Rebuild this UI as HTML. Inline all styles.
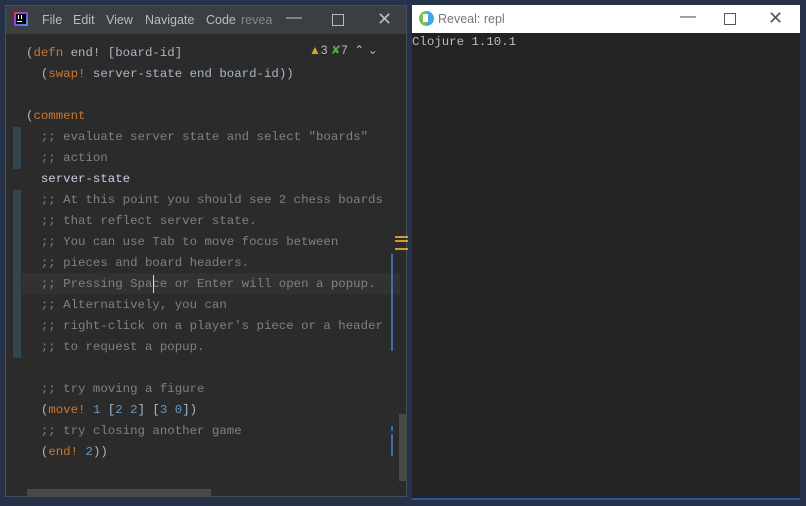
<!DOCTYPE html>
<html><head><style>
body{margin:0;width:806px;height:506px;background:#26324a;position:relative;overflow:hidden;font-family:"Liberation Sans",sans-serif}
.ide{position:absolute;left:5px;top:5px;width:402px;height:492px;background:#2b2b2b;border:1px solid #4a4f57;box-sizing:border-box}
.tb{position:absolute;left:0;top:0;width:100%;height:28px;background:#3c3f41;color:#bbb;font-size:12.5px}
.tb span{position:absolute;top:7px}
.code{position:absolute;left:0;top:1px;font-family:"Liberation Mono",monospace;font-size:12.4px;color:#a9b7c6;white-space:pre}
.l{position:absolute;left:20px;height:21px;line-height:21px}
.c{color:#808080}.k{color:#cc7832}.n{color:#6897bb}.p{color:#a9b7c6}
.rw{position:absolute;left:412px;top:5px;width:388px;height:493px;background:#232323;border-bottom:2px solid #2a5699}
.rt{position:absolute;left:0;top:0;width:100%;height:28px;background:#fff;color:#777;font-size:12.5px}
</style></head><body>
<div class="ide">
 <div class="tb">
  <div style="position:absolute;left:8px;top:6px;width:14px;height:14px;background:linear-gradient(135deg,#e8356c,#7b4bf0,#2da8ff)"><div style="position:absolute;left:2px;top:2px;width:10px;height:10px;background:#000"></div><div style="position:absolute;left:3px;top:9px;width:5px;height:1px;background:#fff"></div><div style="position:absolute;left:4px;top:3px;width:1px;height:4px;background:#fff"></div><div style="position:absolute;left:7px;top:3px;width:1px;height:4px;background:#fff"></div></div>
  <span style="left:36px">File</span><span style="left:67px">Edit</span><span style="left:100px">View</span><span style="left:139px">Navigate</span><span style="left:200px">Code</span><span style="left:235px;color:#888">revea</span>
  <span style="left:280px;top:3px;font-size:16px">&#8212;</span>
  <div style="position:absolute;left:326px;top:8px;width:10px;height:10px;border:1px solid #bbb"></div>
  <span style="left:371px;top:3px;font-size:18px">&#x2715;</span>
 </div>
 <div style="position:absolute;left:7px;top:121px;width:8px;height:42px;background:#34444f"></div>
 <div style="position:absolute;left:7px;top:184px;width:8px;height:168px;background:#34444f"></div>
 <div style="position:absolute;left:16px;top:267px;width:378px;height:21px;background:#323232"></div>
 <div style="position:absolute;left:385px;top:248px;width:2px;height:97px;background:#3e6fa8"></div>
 <div style="position:absolute;left:385px;top:420px;width:2px;height:5px;background:#3e6fa8"></div>
 <div style="position:absolute;left:385px;top:428px;width:2px;height:22px;background:#3e6fa8"></div>
 <div style="position:absolute;left:389px;top:230px;width:13px;height:2px;background:#d09a30"></div>
 <div style="position:absolute;left:389px;top:234px;width:13px;height:2px;background:#d09a30"></div>
 <div style="position:absolute;left:389px;top:242px;width:13px;height:2px;background:#d09a30"></div>
 <div style="position:absolute;left:393px;top:408px;width:8px;height:67px;background:#494949"></div>
 <div style="position:absolute;left:21px;top:483px;width:184px;height:8px;background:#494949"></div>
 <div style="position:absolute;left:303px;top:37px;font-size:12px;color:#bbb"><span style="color:#e0a030">&#9650;</span>3 <span style="color:#5aa84a">&#10008;</span>7 &nbsp;&#8963; &#8964;</div>
 <div class="code">
<div class="l" style="top:36px">(<span class="k">defn</span> end! [board-id]</div>
<div class="l" style="top:57px">  (<span class="k">swap!</span> server-state end board-id))</div>
<div class="l" style="top:99px">(<span class="k">comment</span></div>
<div class="l c" style="top:120px">  ;; evaluate server state and select "boards"</div>
<div class="l c" style="top:141px">  ;; action</div>
<div class="l" style="top:162px;color:#c5d0e0">  server-state</div>
<div class="l c" style="top:183px">  ;; At this point you should see 2 chess boards</div>
<div class="l c" style="top:204px">  ;; that reflect server state.</div>
<div class="l c" style="top:225px">  ;; You can use Tab to move focus between</div>
<div class="l c" style="top:246px">  ;; pieces and board headers.</div>
<div class="l c" style="top:267px">  ;; Pressing Space or Enter will open a popup.</div>
<div class="l c" style="top:288px">  ;; Alternatively, you can</div>
<div class="l c" style="top:309px">  ;; right-click on a player's piece or a header</div>
<div class="l c" style="top:330px">  ;; to request a popup.</div>
<div class="l c" style="top:372px">  ;; try moving a figure</div>
<div class="l" style="top:393px">  (<span class="k">move!</span> <span class="n">1</span> [<span class="n">2 2</span>] [<span class="n">3 0</span>])</div>
<div class="l c" style="top:414px">  ;; try closing another game</div>
<div class="l" style="top:435px">  (<span class="k">end!</span> <span class="n">2</span>))</div>
 </div>
 <div style="position:absolute;left:147px;top:269px;width:1px;height:18px;background:#ddd"></div>
</div>
<div class="rw">
 <div class="rt">
  <div style="position:absolute;left:7px;top:6px;width:15px;height:15px;border-radius:50%;background:conic-gradient(#3fa9e0 0 50%,#7cc04a 50% 100%)"><div style="position:absolute;left:4px;top:3px;width:5px;height:8px;background:#fff"></div></div>
  <span style="position:absolute;left:26px;top:7px">Reveal: repl</span>
  <span style="position:absolute;left:268px;top:3px;font-size:16px;color:#555">&#8212;</span>
  <div style="position:absolute;left:312px;top:8px;width:10px;height:10px;border:1px solid #555"></div>
  <span style="position:absolute;left:356px;top:3px;font-size:18px;color:#555">&#x2715;</span>
 </div>
 <div style="position:absolute;left:0;top:30px;font-family:'Liberation Mono',monospace;font-size:12.4px;color:#bbb">Clojure 1.10.1</div>
</div>
</body></html>
